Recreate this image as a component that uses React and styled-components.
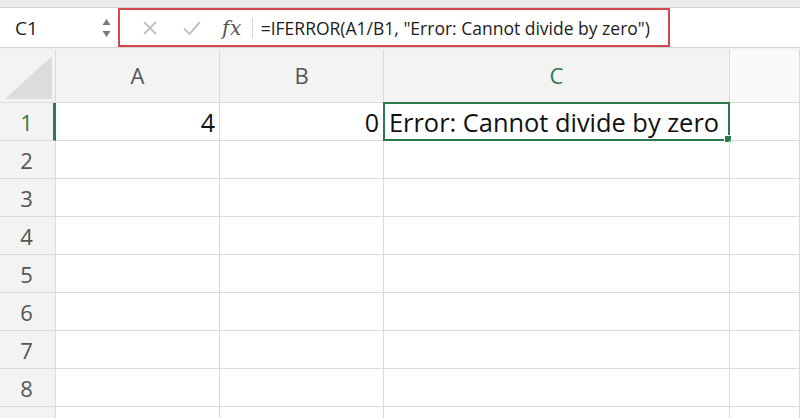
import React from "react";
import styled, { createGlobalStyle } from "styled-components";

const GlobalStyle = createGlobalStyle`
  html, body {
    margin: 0;
    padding: 0;
    background: #ffffff;
  }
  body {
    font-family: "Open Sans", "Liberation Sans", sans-serif;
  }
`;

const GREEN = "#2b7a4b";
const GRID = "#dadada";

const Screen = styled.div`
  width: 800px;
  height: 418px;
  overflow: hidden;
  display: flex;
  flex-direction: column;
  background: #ffffff;

  & > * {
    flex-shrink: 0;
  }
`;

const TopStrip = styled.div`
  height: 7px;
  background: #ebebeb;
  border-bottom: 1px solid #d4d4d4;
`;

const FormulaBar = styled.div`
  height: 39px;
  display: flex;
  align-items: center;
  background: #ffffff;
  border-bottom: 1px solid #d2d2d2;
`;

const NameBox = styled.div`
  width: 118px;
  height: 100%;
  box-sizing: border-box;
  display: flex;
  align-items: center;
  justify-content: space-between;
  padding: 0 7px 0 15px;
  font-size: 19px;
  color: #222;
`;

const Spinner = styled.svg`
  width: 9px;
  height: 20px;
  fill: #7a7a7a;
`;

const FormulaBox = styled.div`
  width: 552px;
  height: 39px;
  box-sizing: border-box;
  border: 2px solid #d5474f;
  display: flex;
  align-items: center;
  padding-left: 22px;
`;

const IconSlot = styled.div`
  width: ${(p) => p.$w}px;
  display: flex;
  align-items: center;
  justify-content: flex-start;
`;

const Fx = styled.span`
  font-family: "DejaVu Serif", "Liberation Serif", serif;
  font-style: italic;
  font-size: 20px;
  color: #555;
  letter-spacing: 0.5px;
`;

const Divider = styled.div`
  width: 1px;
  height: 20px;
  background: #d6d6d6;
  margin: 0 8px 0 10px;
`;

const FormulaText = styled.div`
  font-size: 17.5px;
  color: #1c1c1c;
  white-space: nowrap;
`;

const Gap = styled.div`
  height: 2px;
  background: #f2f2f2;
`;

const Sheet = styled.div`
  display: grid;
  grid-template-columns: 56px 164px 164px 346px 1fr;
  grid-template-rows: 53px repeat(9, 38px);
`;

const Corner = styled.div`
  background: #f3f3f3;
  border-right: 1px solid ${GRID};
  border-bottom: 1px solid ${GRID};
  display: flex;
  align-items: flex-end;
  justify-content: flex-end;
  padding: 0 3px 3px 0;
`;

const ColHeader = styled.div`
  background: ${(p) => (p.$faint ? "#fafafa" : "#f3f3f3")};
  border-right: 1px solid ${GRID};
  border-bottom: 1px solid ${GRID};
  display: flex;
  align-items: center;
  justify-content: center;
  font-size: 22px;
  color: ${(p) => (p.$active ? GREEN : "#555")};
  padding-bottom: 2px;
`;

const RowHeader = styled.div`
  background: #f3f3f3;
  border-right: ${(p) => (p.$active ? `3px solid ${GREEN}` : `1px solid ${GRID}`)};
  border-bottom: 1px solid ${GRID};
  display: flex;
  align-items: center;
  justify-content: center;
  font-size: 22px;
  color: ${(p) => (p.$active ? GREEN : "#555")};
  padding-right: ${(p) => (p.$active ? 0 : 2)}px;
`;

const Cell = styled.div`
  position: relative;
  box-sizing: border-box;
  border-right: 1px solid ${GRID};
  border-bottom: 1px solid ${GRID};
  display: flex;
  align-items: center;
  justify-content: ${(p) => (p.$num ? "flex-end" : "flex-start")};
  padding: 0 4px 0 5px;
  font-size: 25px;
  color: #111;
  white-space: nowrap;
`;

const SelectedCell = styled(Cell)`
  border: 2px solid ${GREEN};
  margin: -1px 0 0 -1px;
  padding-left: 4px;
  font-size: 25.4px;
`;

const Handle = styled.span`
  position: absolute;
  right: -4px;
  bottom: -4px;
  width: 6px;
  height: 6px;
  background: ${GREEN};
  border: 1px solid #fff;
`;

const rows = [1, 2, 3, 4, 5, 6, 7, 8, 9];

export default function App() {
  return (
    <Screen>
      <GlobalStyle />
      <TopStrip />
      <FormulaBar>
        <NameBox>
          <span>C1</span>
          <Spinner viewBox="0 0 9 20">
            <polygon points="4.5,1 8.5,7 0.5,7" />
            <polygon points="0.5,13 8.5,13 4.5,19" />
          </Spinner>
        </NameBox>
        <FormulaBox>
          <IconSlot $w={40}>
            <svg width="16" height="16" viewBox="0 0 16 16">
              <path d="M2 2 L14 14 M14 2 L2 14" stroke="#c4c4c4" strokeWidth="2" fill="none" />
            </svg>
          </IconSlot>
          <IconSlot $w={40}>
            <svg width="20" height="16" viewBox="0 0 20 16">
              <path d="M2 8.5 L7.5 14 L18 2" stroke="#c4c4c4" strokeWidth="2" fill="none" />
            </svg>
          </IconSlot>
          <Fx>fx</Fx>
          <Divider />
          <FormulaText>=IFERROR(A1/B1, "Error: Cannot divide by zero")</FormulaText>
        </FormulaBox>
      </FormulaBar>
      <Gap />
      <Sheet>
        <Corner>
          <svg width="47" height="43" viewBox="0 0 47 43">
            <polygon points="0,43 47,43 47,0" fill="#dcdcdc" />
          </svg>
        </Corner>
        <ColHeader>A</ColHeader>
        <ColHeader>B</ColHeader>
        <ColHeader $active>C</ColHeader>
        <ColHeader $faint />
        {rows.map((r) => (
          <React.Fragment key={r}>
            <RowHeader $active={r === 1}>{r}</RowHeader>
            {r === 1 ? (
              <>
                <Cell $num>4</Cell>
                <Cell $num>0</Cell>
                <SelectedCell>
                  Error: Cannot divide by zero
                  <Handle />
                </SelectedCell>
                <Cell />
              </>
            ) : (
              <>
                <Cell />
                <Cell />
                <Cell />
                <Cell />
              </>
            )}
          </React.Fragment>
        ))}
      </Sheet>
    </Screen>
  );
}
